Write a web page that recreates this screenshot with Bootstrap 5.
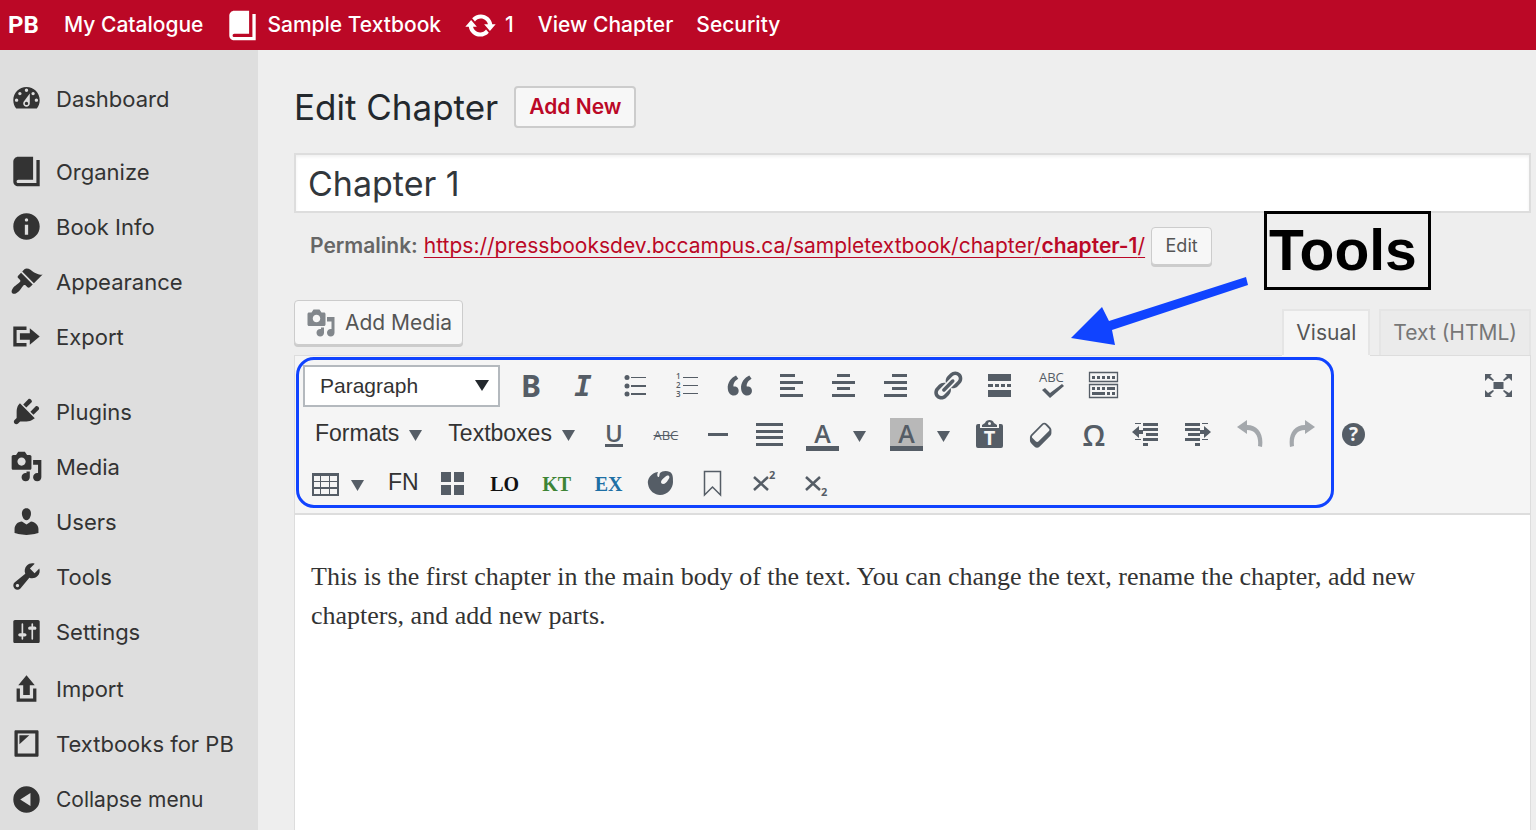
<!DOCTYPE html>
<html lang="en">
<head>
<meta charset="utf-8">
<meta name="viewport" content="width=device-width, initial-scale=1">
<title>Edit Chapter</title>
<link href="https://cdn.jsdelivr.net/npm/bootstrap@5.3.0/dist/css/bootstrap.min.css" rel="stylesheet">
<style>
  body { font-family: Inter, "Liberation Sans", sans-serif; font-size: 22px; line-height: 28px; color: #32373c; background: #eee; }
  a { text-decoration: none; color: inherit; }
  .ico { width: 33px; height: 33px; fill: currentColor; flex: none; display: block; }
  .topbar { background: #bb0826; color: #fff; height: 50px; font-size: 21px; font-weight: 500; }
  .pb-logo { font: bold 24px/50px Roboto, "Liberation Sans", sans-serif; width: 56px; }
  .topbar .book-link { margin-left: 23px; }
  .side { width: 258px; background: #dedede; color: #333; padding-top: 21px; }
  .side ul { margin-bottom: 20px; }
  .side ul.first { margin-bottom: 18px; }
  .side ul.tight { margin-bottom: 2px; }
  .side ul.last { margin-bottom: 1px; }
  .side a, .side button { height: 55px; padding-left: 10px; gap: 13px; width: 100%; color: #333; border: 0; background: none; }
  .side button { font-size: 21px; }
  .content-area { padding: 36px 5px 0 36px; min-width: 0; }
  h1 { font-size: 35px; line-height: 42px; font-weight: 400; color: #23282d; }
  .wpbtn { background: #f7f7f7; border: 2px solid #ccc; border-radius: 4px; color: #555; line-height: 28px; }
  .addnew { color: #bb0826; font-size: 21px; font-weight: 600; height: 42px; padding: 0 13px; }
  .title-box { height: 60px; margin-top: 25px; font-size: 34px; color: #32373c; border: 2px solid #ddd; border-radius: 0; padding: 0 12px; box-shadow: inset 0 2px 3px rgba(0,0,0,.06); }
  .permalink { margin-top: 13px; height: 40px; padding-left: 16px; color: #666; font-size: 21px; gap: 6px; white-space: nowrap; }
  .permalink a { color: #bb0826; text-decoration: underline; text-decoration-thickness: 1px; text-underline-offset: 4px; }
  .shade { box-shadow: 0 2px 0 #ccc; border-width: 1px; }
  .edit-slug { font-size: 18px; height: 38px; width: 61px; }
  .media-row { margin-top: 34px; }
  .add-media { height: 45px; width: 169px; padding: 0 11px; gap: 9px; font-size: 21px; }
  .add-media .ico { width: 30px; height: 30px; color: #82878c; }
  .tabs { margin-top: 9px; gap: 9px; }
  .tabs button { height: 46px; border: 2px solid #e5e5e5; background: #ebebeb; color: #777; font-size: 21px; padding: 0 12px; border-bottom: 0; }
  .tabs .on { background: #f5f5f5; color: #555; box-shadow: 0 2px 0 #f5f5f5; position: relative; z-index: 1; }
  .edit-panel { border: 1px solid #ddd; border-bottom: 0; background: #fff; }
  .tools { background: #f5f5f5; border-bottom: 2px solid #ddd; padding: 5px 0 5px 4px; color: #555d66; font-family: "Liberation Sans", sans-serif; }
  .tool-row { height: 49px; }
  .tool-row button { border: 0; background: none; color: #555d66; height: 44px; width: 52px; padding: 0; display: flex; align-items: center; justify-content: center; flex: none; }
  .tool-row button.wordy { color: #333; font-size: 23px; line-height: 24px; width: auto; gap: 10px; padding: 0 9px 3px; }
  .tool-row button.split { width: 84px; justify-content: flex-start; padding-left: 10px; gap: 14px; }
  .tool-row button.grid-split { width: 77px; gap: 9px; }
  .tool-row button.lo { color: #111; }
  .tool-row button.kt { color: #3d8435; }
  .tool-row button.ex { color: #1d6fa5; }
  .tool-row button.full { margin: 0 6px 0 auto; }
  .tri { width: 13px; height: 11px; fill: #555d66; flex: none; margin-top: 4px; }
  .para-sel { width: 197px; height: 42px; border: 2px solid #b4b9be; border-radius: 0; font-size: 21px; padding: 0 15px; color: #333; margin-right: 5px; background-size: 14px 11px; background-position: right 9px center; background-image: url("data:image/svg+xml,%3csvg xmlns='http://www.w3.org/2000/svg' viewBox='0 0 14 11'%3e%3cpath fill='%2323282d' d='M0 0h14L7 11z'/%3e%3c/svg%3e"); }
  .g-bold { font: bold 30px/32px "Noto Sans", sans-serif; }
  .g-ital { font: italic bold 29px/32px "DejaVu Sans Mono", monospace; }
  .g-under { font: 600 24px/21px "Open Sans", sans-serif; border-bottom: 3px solid; padding: 0 0 1px; }
  .g-abc { font: 13px/16px "Open Sans", sans-serif; text-decoration: line-through; }
  .g-serif { font: bold 20px/24px "Liberation Serif", serif; }
  .g-color { font: 600 25px/30px "Open Sans", sans-serif; width: 33px; height: 33px; border-bottom: 5px solid; }
  .g-back { background: #b8b8b8; }
  .g-omega { font: 600 29px/32px "Open Sans", "Noto Sans", sans-serif; }
  .ring { position: absolute; left: 1px; top: 1px; bottom: 5px; width: 1038px; border: 3px solid #1043ff; border-radius: 18px; pointer-events: none; }
  .story { font: 26px/39px "Liberation Serif", serif; color: #333; padding: 42px 90px 0 16px; }
  .callout-box { position: absolute; top: 211px; right: 105px; width: 167px; height: 79px; border: 3px solid #000; color: #000; font: bold 57px/73px "Liberation Sans", sans-serif; padding-left: 2px; }
  .arrow { position: absolute; top: 276px; right: 286px; width: 180px; height: 70px; fill: #1043ff; }
</style>
</head>
<body>
<svg class="d-none" xmlns="http://www.w3.org/2000/svg">
  <symbol id="i-book" viewBox="0 0 20 20"><path d="M16 3h2v16H5c-1.66 0-3-1.34-3-3V4c0-1.66 1.34-3 3-3h9v14H5c-.55 0-1 .45-1 1s.45 1 1 1h11V3z"/></symbol>
  <symbol id="i-media" viewBox="0 0 20 20"><path d="M13 11V4c0-.55-.45-1-1-1h-1.67L9 1H5L3.67 3H2c-.55 0-1 .45-1 1v7c0 .55.45 1 1 1h10c.55 0 1-.45 1-1zM7 4.5c1.38 0 2.5 1.12 2.5 2.5S8.38 9.5 7 9.5 4.5 8.38 4.5 7 5.62 4.5 7 4.5zM14 6h5v10.500c0 1.380-1.120 2.500-2.500 2.500S14 17.880 14 16.500s1.120-2.500 2.500-2.500c.17 0 .34.02.5.05V9h-3V6zm-4 8.050V13h2v3.500c0 1.380-1.120 2.500-2.500 2.500S7 17.880 7 16.500 8.120 14 9.500 14c.17 0 .34.02.5.05z"/></symbol>
  <symbol id="i-tri" viewBox="0 0 13 11"><path d="M0 0h13L6.500 11z"/></symbol>
</svg>

<div class="d-flex flex-column min-vh-100 position-relative">
  <nav class="topbar navbar p-0 flex-nowrap justify-content-start text-nowrap" aria-label="Admin bar">
    <a class="pb-logo ms-2" href="#">PB</a>
    <a href="#">My Catalogue</a>
    <a class="book-link d-flex align-items-center" href="#"><svg class="ico me-2"><use href="#i-book"/></svg>Sample Textbook</a>
    <a class="book-link d-flex align-items-center" href="#"><svg class="ico me-2" viewBox="0 0 20 20"><path d="M10.2 3.28c3.53 0 6.43 2.61 6.92 6h2.08l-3.5 4-3.5-4h2.32c-.45-1.97-2.21-3.45-4.32-3.45-1.45 0-2.73.71-3.54 1.78L4.95 5.66C6.23 4.2 8.11 3.28 10.2 3.28zm-.4 13.44c-3.52 0-6.43-2.61-6.92-6H.8l3.5-4 3.5 4H5.48c.45 1.97 2.21 3.45 4.32 3.45 1.45 0 2.73-.71 3.54-1.78l1.71 1.95c-1.28 1.46-3.15 2.38-5.25 2.38z"/></svg>1</a>
    <a class="ms-4" href="#">View Chapter</a>
    <a class="book-link" href="#">Security</a>
  </nav>

  <div class="d-flex flex-grow-1">
    <aside class="side flex-shrink-0">
      <ul class="list-unstyled first">
        <li><a class="d-flex align-items-center" href="#"><svg class="ico" viewBox="0 0 20 20"><path d="M3.76 16h12.48c1.1-1.37 1.76-3.11 1.76-5 0-4.42-3.58-8-8-8s-8 3.58-8 8c0 1.89.66 3.63 1.76 5zM10 4c.55 0 1 .45 1 1s-.45 1-1 1-1-.45-1-1 .45-1 1-1zM6 6c.55 0 1 .45 1 1s-.45 1-1 1-1-.45-1-1 .45-1 1-1zm8 0c.55 0 1 .45 1 1s-.45 1-1 1-1-.45-1-1 .45-1 1-1zm-5.37 5.55L12 7v6c0 1.1-.9 2-2 2s-2-.9-2-2c0-.57.24-1.08.63-1.45zM4 10c.55 0 1 .45 1 1s-.45 1-1 1-1-.45-1-1 .45-1 1-1zm12 0c.55 0 1 .45 1 1s-.45 1-1 1-1-.45-1-1 .45-1 1-1zm-5 3c0-.55-.45-1-1-1s-1 .45-1 1 .45 1 1 1 1-.45 1-1z"/></svg>Dashboard</a></li>
      </ul>
      <ul class="list-unstyled">
        <li><a class="d-flex align-items-center" href="#"><svg class="ico"><use href="#i-book"/></svg>Organize</a></li>
        <li><a class="d-flex align-items-center" href="#"><svg class="ico" viewBox="0 0 20 20"><path d="M10 2c4.42 0 8 3.58 8 8s-3.58 8-8 8-8-3.58-8-8 3.58-8 8-8zm1 4c0-.55-.45-1-1-1s-1 .45-1 1 .45 1 1 1 1-.45 1-1zm0 9V9H9v6h2z"/></svg>Book Info</a></li>
        <li><a class="d-flex align-items-center" href="#"><svg class="ico" viewBox="0 0 20 20"><path d="M14.48 11.06L7.41 3.99l1.5-1.5c.5-.56 2.3-.47 3.51.32 1.21.8 1.43 1.28 2.91 2.1 1.18.64 2.45 1.26 4.45.85zm-.71.71L6.7 4.7 4.93 6.47c-.39.39-.39 1.02 0 1.41l1.06 1.06c.39.39.39 1.03 0 1.42-.6.6-1.43 1.11-2.21 1.69-.35.26-.7.53-1.01.84C1.43 14.23.4 16.08 1.4 17.07c.99 1 2.84-.03 4.18-1.36.31-.31.58-.66.85-1.02.57-.78 1.08-1.61 1.69-2.21.39-.39 1.02-.39 1.41 0l1.06 1.06c.39.39 1.02.39 1.41 0z"/></svg>Appearance</a></li>
        <li><a class="d-flex align-items-center" href="#"><svg class="ico" viewBox="0 0 20 20"><path d="M4 6h6V4H2v12h8v-2H4V6zm2 2h6V5l6 5-6 5v-3H6V8z"/></svg>Export</a></li>
      </ul>
      <ul class="list-unstyled tight">
        <li><a class="d-flex align-items-center" href="#"><svg class="ico" viewBox="0 0 20 20"><path d="M13.11 4.36L9.87 7.6 8 5.73l3.24-3.24c.35-.34 1.05-.2 1.56.32.52.51.66 1.21.31 1.55zm-8 1.77l.91-1.12 9.01 9.01-1.19.84c-.71.71-2.63 1.16-3.82 1.16H6.14L4.9 17.26c-.59.59-1.54.59-2.12 0-.59-.58-.59-1.53 0-2.12l1.24-1.24v-3.88c0-1.13.4-3.19 1.09-3.89zm7.26 3.97l3.24-3.24c.34-.35 1.04-.21 1.55.31.52.51.66 1.21.31 1.55l-3.24 3.25z"/></svg>Plugins</a></li>
        <li><a class="d-flex align-items-center" href="#"><svg class="ico"><use href="#i-media"/></svg>Media</a></li>
        <li><a class="d-flex align-items-center" href="#"><svg class="ico" viewBox="0 0 20 20"><path d="M10 9.25c-2.27 0-2.73-3.44-2.73-3.44C7 4.02 7.82 2 9.97 2c2.16 0 2.98 2.02 2.71 3.81 0 0-.41 3.44-2.68 3.44zm0 2.57L12.72 10c2.39 0 4.52 2.33 4.52 4.53v2.49s-3.65 1.13-7.24 1.13c-3.65 0-7.24-1.13-7.24-1.13v-2.49c0-2.25 1.94-4.48 4.47-4.48z"/></svg>Users</a></li>
        <li><a class="d-flex align-items-center" href="#"><svg class="ico" viewBox="0 0 20 20"><path d="M16.68 9.77c-1.34 1.34-3.3 1.67-4.95.99l-5.41 6.52c-.99.99-2.59.99-3.58 0s-.99-2.59 0-3.57l6.52-5.42c-.68-1.65-.35-3.61.99-4.95 1.28-1.28 3.12-1.62 4.72-1.06l-2.89 2.89 2.82 2.82 2.86-2.87c.53 1.58.18 3.39-1.08 4.65zM3.81 16.21c.4.39 1.04.39 1.43 0 .4-.4.4-1.04 0-1.43-.39-.4-1.03-.4-1.43 0-.39.39-.39 1.03 0 1.43z"/></svg>Tools</a></li>
        <li><a class="d-flex align-items-center" href="#"><svg class="ico" viewBox="0 0 20 20"><path d="M18 16V4c0-.55-.45-1-1-1H3c-.55 0-1 .45-1 1v12c0 .55.45 1 1 1h14c.55 0 1-.45 1-1zM8 11h1c.55 0 1 .45 1 1s-.45 1-1 1H8v1.500c0 .28-.22.5-.5.5s-.5-.22-.5-.5V13H6c-.55 0-1-.45-1-1s.45-1 1-1h1V5.500c0-.28.22-.5.5-.5s.5.22.5.5V11zm5-2h-1c-.55 0-1-.45-1-1s.45-1 1-1h1V5.500c0-.28.22-.5.5-.5s.5.22.5.5V7h1c.55 0 1 .45 1 1s-.45 1-1 1h-1v5.500c0 .28-.22.5-.5.5s-.5-.22-.5-.5V9z"/></svg>Settings</a></li>
      </ul>
      <ul class="list-unstyled last">
        <li><a class="d-flex align-items-center" href="#"><svg class="ico" viewBox="0 0 20 20"><path d="M8 14V8H5l5-6 5 6h-3v6H8zm-2 2v-6H4v8h12v-8h-2v6H6z"/></svg>Import</a></li>
        <li><a class="d-flex align-items-center" href="#"><svg class="ico" viewBox="0 0 20 20"><path fill-rule="evenodd" d="M3.500 2h13c.5 0 .8.300.8.800v14.400c0 .5-.300.800-.800.800h-13c-.5 0-.800-.300-.800-.800V2.800c0-.5.300-.800.800-.800zM4.700 4v12h10.600V4zM5.700 5h6l-6 5.500z"/></svg>Textbooks for PB</a></li>
      </ul>
      <button type="button" class="d-flex align-items-center"><svg class="ico" viewBox="0 0 20 20"><path fill-rule="evenodd" d="M10 2a8 8 0 1 1 0 16 8 8 0 0 1 0-16zM12.400 6v8L6.200 10z"/></svg>Collapse menu</button>
    </aside>

    <main class="content-area flex-grow-1 d-flex flex-column">
      <div class="d-flex align-items-center gap-3">
        <h1 class="m-0">Edit Chapter</h1>
        <button type="button" class="wpbtn addnew">Add New</button>
      </div>
      <input type="text" class="form-control title-box" value="Chapter 1" aria-label="Chapter title">
      <div class="permalink d-flex align-items-center">
        <b class="fw-semibold">Permalink:</b>
        <a href="#">https://pressbooksdev.bccampus.ca/sampletextbook/chapter/<b class="fw-semibold">chapter-1</b>/</a>
        <button type="button" class="wpbtn shade edit-slug p-0">Edit</button>
      </div>
      <div class="media-row d-flex justify-content-between align-items-start">
        <button type="button" class="wpbtn shade add-media d-flex align-items-center text-nowrap"><svg class="ico"><use href="#i-media"/></svg>Add Media</button>
        <div class="tabs d-flex">
          <button type="button" class="on">Visual</button>
          <button type="button">Text (HTML)</button>
        </div>
      </div>
      <section class="edit-panel flex-grow-1">
        <div class="tools position-relative">
          <div class="ring"></div>
          <div class="tool-row d-flex align-items-center ps-1">
            <select class="form-select para-sel" aria-label="Block format"><option>Paragraph</option></select>
            <button type="button" aria-label="Bold"><span class="g-bold">B</span></button>
            <button type="button" aria-label="Italic"><span class="g-ital">I</span></button>
            <button type="button" aria-label="Bulleted list"><svg class="ico" viewBox="0 0 33 33"><path d="M12 8h15v1H12zM12 16h15v2H12zM12 24h15v2H12z"/><circle cx="8" cy="8.500" r="2.500"/><circle cx="8" cy="17" r="2.500"/><circle cx="8" cy="25" r="2.500"/></svg></button>
            <button type="button" aria-label="Numbered list"><svg class="ico" viewBox="0 0 33 33"><path d="M12 8h15v1H12zM12 16h15v1H12zM12 24h15v1H12z"/><g font-family="Open Sans" font-size="8" font-weight="600"><text x="5" y="10">1</text><text x="5" y="19">2</text><text x="5" y="28">3</text></g></svg></button>
            <button type="button" aria-label="Quote"><svg class="ico" viewBox="0 0 20 20"><path d="M9.490 13.220c0-.74-.2-1.380-.61-1.900-.62-.78-1.830-.88-2.530-.72-.29-1.650 1.110-3.750 2.920-4.650L7.880 4c-2.730 1.300-5.420 4.280-4.960 8.050C3.210 14.430 4.590 16 6.540 16c.85 0 1.560-.25 2.120-.75s.83-1.180.83-2.030zm8.050 0c0-.74-.2-1.380-.61-1.900-.63-.78-1.830-.88-2.530-.72-.29-1.650 1.110-3.750 2.920-4.650L15.930 4c-2.730 1.300-5.410 4.280-4.950 8.050.29 2.380 1.660 3.950 3.610 3.950.85 0 1.560-.25 2.120-.75s.83-1.180.83-2.030z"/></svg></button>
            <button type="button" aria-label="Align left"><svg class="ico" viewBox="0 0 33 33"><path d="M5 5h15v3H5zM5 12h23v3H5zM5 18h15v3H5zM5 25h23v3H5z"/></svg></button>
            <button type="button" aria-label="Align center"><svg class="ico" viewBox="0 0 33 33"><path d="M10 5h13v3H10zM5 12h23v3H5zM10 18h13v3H10zM5 25h23v3H5z"/></svg></button>
            <button type="button" aria-label="Align right"><svg class="ico" viewBox="0 0 33 33"><path d="M13 5h15v3H13zM5 12h23v3H5zM13 18h15v3H13zM5 25h23v3H5z"/></svg></button>
            <button type="button" aria-label="Link"><svg class="ico" viewBox="0 0 20 20"><path d="M17.740 2.760c1.680 1.690 1.680 4.410 0 6.100l-1.530 1.520c-1.120 1.120-2.700 1.470-4.140 1.090l2.620-2.610.76-.77.76-.76c.84-.84.84-2.200 0-3.040-.84-.85-2.200-.85-3.040 0l-.77.76-3.380 3.380c-.37-1.440-.02-3.020 1.100-4.140l1.520-1.530c1.690-1.680 4.420-1.680 6.100 0zM8.590 13.430l5.340-5.340c.42-.42.42-1.100 0-1.520-.44-.43-1.130-.39-1.530 0l-5.330 5.340c-.42.42-.42 1.100 0 1.520.44.43 1.130.39 1.520 0zm-.76 2.290l4.140-4.150c.38 1.440.03 3.020-1.090 4.140l-1.520 1.530c-1.690 1.680-4.410 1.680-6.100 0-1.680-1.680-1.680-4.420 0-6.100l1.530-1.520c1.120-1.120 2.700-1.470 4.140-1.100l-4.140 4.150c-.85.84-.85 2.200 0 3.050.84.84 2.200.84 3.040 0z"/></svg></button>
            <button type="button" aria-label="Read more"><svg class="ico" viewBox="0 0 33 33"><path d="M5 5h23v7H5zM5 21h23v7H5zM5 15h5v3H5zM12 15h4v3h-4zM18 15h4v3h-4zM24 15h4v3h-4z"/></svg></button>
            <button type="button" aria-label="Spelling"><svg class="ico" viewBox="0 0 33 33"><text x="4" y="13" font-family="Open Sans" font-size="13">ABC</text><path d="M7 21l3-2 5 5 12-9 2 2-14 12z"/></svg></button>
            <button type="button" aria-label="Toolbar toggle"><svg class="ico" viewBox="0 0 33 33"><path fill="none" stroke="currentColor" stroke-width="1.300" d="M2.500 3.500h28v9h-28zM2.500 15.500h28v13h-28z"/><path d="M5 7h3v3H5zM10 7h3v3h-3zM15 7h3v3h-3zM20 7h3v3h-3zM25 7h3v3h-3zM5 18h3v3H5zM10 18h3v3h-3zM15 18h3v3h-3zM20 18h8v3h-8zM5 23h13v3H5zM20 23h3v3h-3zM25 23h3v3h-3z"/></svg></button>
            <button type="button" class="full" aria-label="Fullscreen"><svg class="ico" viewBox="0 0 33 33"><path d="M11.500 13h10v7h-10zM3 5h7L8 7l4 4-1 1-5-3-3 3zM30 5h-7l2 2-4 4 1 1 5-3 3 3zM3 28h7l-2-2 4-4-1-1-5 3-3-3zM30 28h-7l2-2-4-4 1-1 5 3 3-3z"/></svg></button>
          </div>
          <div class="tool-row d-flex align-items-center">
            <button type="button" class="wordy ps-3">Formats<svg class="tri"><use href="#i-tri"/></svg></button>
            <button type="button" class="wordy ms-2 me-1">Textboxes<svg class="tri"><use href="#i-tri"/></svg></button>
            <button type="button" aria-label="Underline"><span class="g-under">U</span></button>
            <button type="button" aria-label="Strikethrough"><span class="g-abc">ABC</span></button>
            <button type="button" aria-label="Horizontal line"><svg class="ico" viewBox="0 0 33 33"><path d="M7 15h20v3H7z"/></svg></button>
            <button type="button" aria-label="Justify"><svg class="ico" viewBox="0 0 33 33"><path d="M3 5h27v3H3zM3 12h27v3H3zM3 18h27v3H3zM3 25h27v3H3z"/></svg></button>
            <button type="button" class="split" aria-label="Text color"><span class="g-color">A</span><svg class="tri"><use href="#i-tri"/></svg></button>
            <button type="button" class="split" aria-label="Background color"><span class="g-color g-back">A</span><svg class="tri"><use href="#i-tri"/></svg></button>
            <button type="button" aria-label="Paste as text"><svg class="ico" viewBox="0 0 33 33"><path d="M3 8q0-2 2-2h2v4h19V6h2q2 0 2 2v20q0 2-2 2H5q-2 0-2-2z"/><path fill-rule="evenodd" d="M9 9V7l3-2c1-4 8-4 9 0l3 2v2zM16.500 4a1.500 1.500 0 1 0 0 3 1.500 1.500 0 0 0 0-3z"/><text x="16.500" y="27" text-anchor="middle" font-family="Noto Sans" font-weight="700" font-size="20" fill="#f5f5f5">T</text></svg></button>
            <button type="button" aria-label="Clear formatting"><svg class="ico" viewBox="0 0 20 20"><path d="M14.290 4.590l1.100 1.110c.41.4.61.94.61 1.470v2.120c0 .53-.2 1.070-.61 1.470l-6.630 6.630c-.4.41-.94.61-1.470.61s-1.070-.2-1.470-.61l-1.110-1.100-1.100-1.110c-.41-.4-.61-.94-.61-1.470v-2.120c0-.54.2-1.070.61-1.480l6.630-6.620c.4-.41.94-.61 1.470-.61s1.060.2 1.470.61zm-6.210 9.700l6.420-6.420c.39-.39.39-1.030 0-1.430L12.360 4.300c-.19-.19-.45-.29-.72-.29s-.52.1-.71.29l-6.420 6.420c-.39.4-.39 1.040 0 1.430l2.140 2.140c.38.38 1.040.38 1.430 0z"/></svg></button>
            <button type="button" aria-label="Special character"><span class="g-omega">Ω</span></button>
            <button type="button" aria-label="Decrease indent"><svg class="ico" viewBox="0 0 33 33"><path d="M3 14l7-6v4h4v4h-4v4zM6 5h6v1H6zM14 5h15v3H14zM14 10h15v3H14zM17 15h12v3H17zM14 20h15v3H14zM6 21h6v1H6zM14 25h5v3h-5z"/></svg></button>
            <button type="button" aria-label="Increase indent"><svg class="ico" viewBox="0 0 33 33"><path d="M30 14l-7-6v4h-4v4h4v4zM21 5h6v1h-6zM4 5h15v3H4zM4 10h15v3H4zM7 15h12v3H7zM4 20h15v3H4zM21 21h6v1h-6zM14 25h5v3h-5z"/></svg></button>
            <button type="button" aria-label="Undo" class="opacity-50"><svg class="ico" viewBox="0 0 33 33"><path d="M4 9l10-7v5c11 0 17 9 15 22l-4-1c1-9-2-16-11-16v4z"/></svg></button>
            <button type="button" aria-label="Redo" class="opacity-50"><svg class="ico" viewBox="0 0 33 33"><path d="M30 9L20 2v5C9 7 3 16 5 29l4-1c-1-9 2-16 11-16v4z"/></svg></button>
            <button type="button" aria-label="Help"><svg class="ico" viewBox="0 0 33 33"><circle cx="16.500" cy="16.500" r="11.500"/><text x="16.500" y="23" text-anchor="middle" font-family="Open Sans" font-weight="700" font-size="19" fill="#f5f5f5">?</text></svg></button>
          </div>
          <div class="tool-row d-flex align-items-center">
            <button type="button" class="split grid-split" aria-label="Table"><svg class="ico" viewBox="0 0 33 33"><path fill-rule="evenodd" d="M3 6h27v23H3zM5 9v5h6V9zM12 9v5h8V9zM21 9v5h7V9zM5 15v5h6v-5zM12 15v5h8v-5zM21 15v5h7v-5zM5 22v5h6v-5zM12 22v5h8v-5zM21 22v5h7v-5z"/></svg><svg class="tri"><use href="#i-tri"/></svg></button>
            <button type="button" class="wordy px-2 ms-1">FN</button>
            <button type="button" aria-label="Blocks"><svg class="ico" viewBox="0 0 33 33"><path d="M5 5h10v10H5zM18 5h10v10H18zM5 18h10v10H5zM18 18h10v10H18z"/></svg></button>
            <button type="button" class="lo"><span class="g-serif">LO</span></button>
            <button type="button" class="kt"><span class="g-serif">KT</span></button>
            <button type="button" class="ex"><span class="g-serif">EX</span></button>
            <button type="button" aria-label="Highlight"><svg class="ico" viewBox="0 0 33 33"><path fill-rule="evenodd" d="M14 5C7 6 3 12 4 17c1 7 7 11 12 11 8 0 13-7 13-13 0-5 0-8-3-10-4-2-8-1-10 1-1 2 0 4-2 4-1-1-1-3 0-5zM17 15c0-2 2-3 4-5 1-1 3-2 4-1s0 3-1 4c-1 2-3 4-5 4-1 0-2-1-2-2z"/></svg></button>
            <button type="button" aria-label="Anchor"><svg class="ico" viewBox="0 0 33 33"><path fill="none" stroke="currentColor" stroke-width="1.500" d="M8.500 4.500h16v23.500l-8-8-8 8z"/></svg></button>
            <button type="button" aria-label="Superscript"><svg class="ico" viewBox="0 0 33 33"><path fill="none" stroke="currentColor" stroke-width="2.500" d="M6 10l14 13M20 10L6 23"/><text x="21" y="12" font-family="Open Sans" font-weight="700" font-size="11">2</text></svg></button>
            <button type="button" aria-label="Subscript"><svg class="ico" viewBox="0 0 33 33"><path fill="none" stroke="currentColor" stroke-width="2.500" d="M6 10l14 13M20 10L6 23"/><text x="21" y="29" font-family="Open Sans" font-weight="700" font-size="11">2</text></svg></button>
          </div>
        </div>
        <p class="story m-0">This is the first chapter in the main body of the text. You can change the text, rename the chapter, add new chapters, and add new parts.</p>
      </section>
    </main>
  </div>
  <div class="callout-box">Tools</div>
  <svg class="arrow" viewBox="0 0 180 70"><path d="M176 1l2 8L42 54l3 15L1 62 32 31l7 14z"/></svg>
</div>
<script src="https://cdn.jsdelivr.net/npm/bootstrap@5.3.0/dist/js/bootstrap.bundle.min.js"></script>
</body>
</html>
